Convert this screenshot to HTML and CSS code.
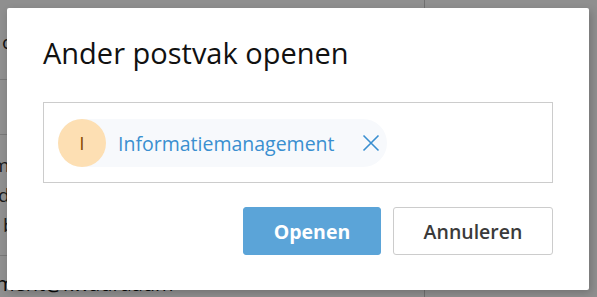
FILE: index.html
```html
<!DOCTYPE html>
<html lang="nl">
<head>
    <meta charset="UTF-8">
    <meta name="viewport" content="width=device-width, initial-scale=1.0">
    <title>Ander postvak openen</title>
    <link rel="stylesheet" href="styles.css">
</head>
<body>
    <div class="page">
        <div class="list">
            <div class="list-row row-top"><span class="frag frag-o">o</span></div>
            <div class="list-row row-mid"></div>
            <div class="list-row row-body">
                <span class="frag frag-m">m</span>
                <span class="frag frag-d">de</span>
                <span class="frag frag-b">b</span>
            </div>
            <div class="list-row row-mail"><span class="mail">ment@kwadraadm</span></div>
        </div>
        <div class="side"></div>
    </div>

    <div class="overlay"></div>

    <div class="dialog">
        <h1 class="dialog-title">Ander postvak openen</h1>

        <div class="picker">
            <div class="chip">
                <span class="avatar">I</span>
                <span class="chip-name">Informatiemanagement</span>
                <button class="chip-remove" aria-label="Verwijderen">
                    <svg width="18" height="18" viewBox="0 0 18 18">
                        <path d="M1.5 1.5 L16.5 16.5 M16.5 1.5 L1.5 16.5" stroke="#3a8fd0" stroke-width="1.6" fill="none"/>
                    </svg>
                </button>
            </div>
        </div>

        <div class="actions">
            <button class="btn btn-primary">Openen</button>
            <button class="btn btn-default">Annuleren</button>
        </div>
    </div>
</body>
</html>
```

FILE: styles.css
```css
* {
    margin: 0;
    padding: 0;
    box-sizing: border-box;
}

body {
    font-family: 'Open Sans', 'Noto Sans', sans-serif;
    background: #ffffff;
    color: #222;
    width: 597px;
    height: 297px;
    overflow: hidden;
    position: relative;
}

/* page behind the modal */
.page {
    display: grid;
    grid-template-columns: 424px 1fr;
    height: 297px;
}

.list {
    display: flex;
    flex-direction: column;
    overflow: hidden;
}

.list-row {
    border-bottom: 1px solid #d6d6d6;
    font-size: 19px;
    white-space: nowrap;
}

.row-top {
    height: 80px;
    padding-top: 30px;
}

.row-mid {
    height: 55px;
}

.row-body {
    height: 121px;
    display: flex;
    flex-direction: column;
    gap: 5px;
    padding-top: 18px;
    color: #333;
}

.row-mail {
    border-bottom: none;
    padding-top: 14px;
}

.frag {
    display: block;
    line-height: 25px;
}

.frag-o { margin-left: 2px; }
.frag-m { margin-left: -8px; }
.frag-d { margin-left: -2px; }
.frag-b { margin-left: 3px; }

.mail {
    display: block;
    margin-left: -4px;
    font-size: 20px;
    color: #111;
}

.side {
    border-left: 1px solid #c8c8c8;
}

.overlay {
    position: absolute;
    inset: 0;
    background: rgba(0, 0, 0, 0.44);
}

/* modal */
.dialog {
    position: absolute;
    left: 7px;
    top: 8px;
    width: 582px;
    height: 282px;
    background: #fff;
    border-radius: 2px;
    box-shadow: 2px 3px 8px rgba(0, 0, 0, 0.2);
    padding: 26px 36px 35px 36px;
}

.dialog-title {
    font-size: 29px;
    font-weight: 400;
    line-height: 38px;
    color: #111;
    margin-bottom: 30px;
}

.picker {
    border: 1px solid #cccccc;
    height: 81px;
    padding: 16px 14px;
    display: flex;
    align-items: flex-start;
}

.chip {
    display: flex;
    align-items: center;
    height: 48px;
    background: #f7f9fc;
    border-radius: 24px;
    padding-right: 7px;
}

.avatar {
    width: 48px;
    height: 48px;
    border-radius: 50%;
    background: #fddfb3;
    color: #8a4a06;
    font-size: 19px;
    display: flex;
    align-items: center;
    justify-content: center;
}

.chip-name {
    margin-left: 12px;
    font-size: 19.5px;
    color: #3a8fd0;
}

.chip-remove {
    margin-left: 27px;
    border: none;
    background: none;
    display: flex;
    cursor: pointer;
}

.actions {
    display: flex;
    justify-content: flex-end;
    gap: 12px;
    margin-top: 24px;
}

.btn {
    height: 48px;
    border-radius: 3px;
    font-family: 'Open Sans', 'Noto Sans', sans-serif;
    font-size: 19.5px;
    cursor: pointer;
}

.btn-primary {
    width: 138px;
    background: #5ba4d8;
    border: 1px solid #5ba4d8;
    color: #fff;
    font-weight: 700;
}

.btn-default {
    width: 160px;
    background: #fff;
    border: 1px solid #cccccc;
    color: #3a3a3a;
    font-weight: 600;
}
```
